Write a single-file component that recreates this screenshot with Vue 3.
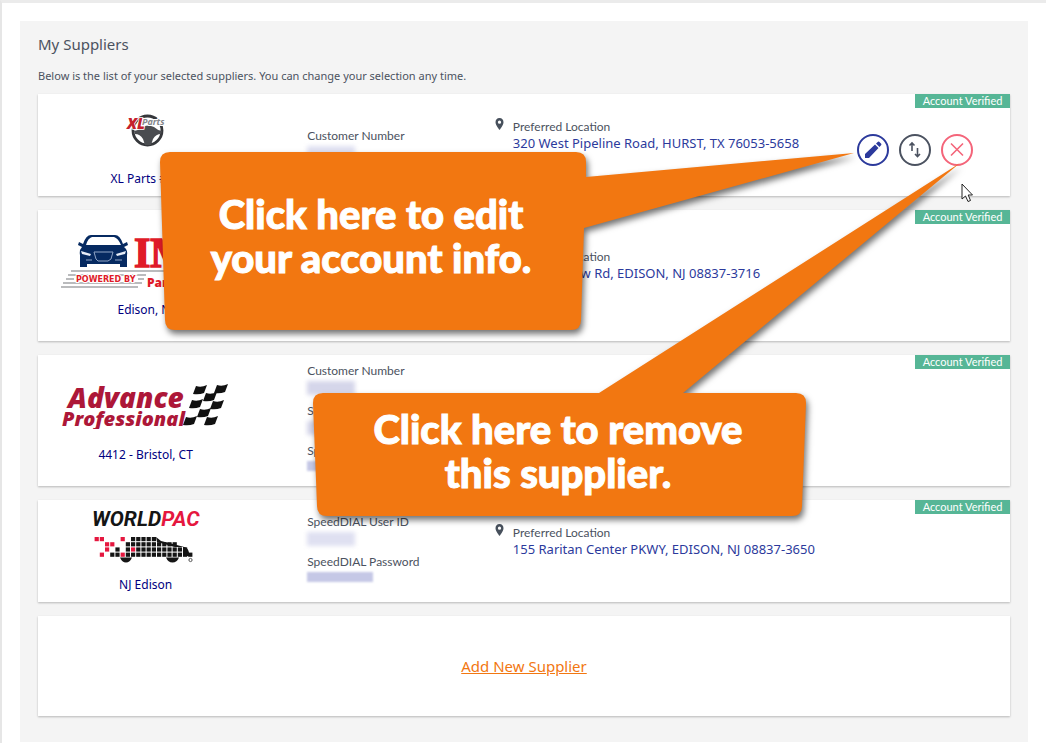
<script setup>
const suppliers = [
  {
    id: 'xl',
    name: 'XL Parts #12',
    fields: [{ label: 'Customer Number', mask: 'soft' }],
    address: '320 West Pipeline Road, HURST, TX 76053-5658',
    actions: true,
  },
  {
    id: 'imc',
    name: 'Edison, NJ',
    fields: [
      { label: 'Customer Number', mask: 'soft' },
      { label: 'User ID', mask: 'soft' },
      { label: 'Password', mask: 'dark' },
    ],
    address: '300 Meadow Rd, EDISON, NJ 08837-3716',
  },
  {
    id: 'advance',
    name: '4412 - Bristol, CT',
    fields: [
      { label: 'Customer Number', mask: 'mid' },
      { label: 'SpeedDIAL User ID', mask: 'mid' },
      { label: 'SpeedDIAL Password', mask: 'dark' },
    ],
  },
  {
    id: 'worldpac',
    name: 'NJ Edison',
    fields: [
      { label: 'SpeedDIAL User ID', mask: 'soft' },
      { label: 'SpeedDIAL Password', mask: 'dark' },
    ],
    address: '155 Raritan Center PKWY, EDISON, NJ 08837-3650',
  },
]

// r = red, b = black, one character per square of the mosaic
const mosaic = [
  'rr...r.bbbbb.......',
  '..rr..bbbbbbbbbb...',
  '..r.b.brbbbbbbbbbb.',
  '.r.bbrbbbbbbbbbbbbb',
]
const squares = mosaic.flatMap((row, y) =>
  [...row].map((c, x) => ({ c, x: x * 5.2 + 3.6, y: y * 5.2 + 29 })).filter((s) => s.c !== '.'),
)

// centres of the black cells of the chequered flag
const checks = [
  [140, 7], [161, 6],
  [150, 14],
  [136, 21], [157, 22],
  [144, 30],
  [130, 38], [151, 38],
]
</script>

<template>
  <div class="page">
    <main class="panel">
      <h1>My Suppliers</h1>
      <p class="intro">Below is the list of your selected suppliers. You can change your selection any time.</p>

      <div class="cards">
        <section v-for="s in suppliers" :key="s.id" class="card">
          <span class="badge">Account Verified</span>

          <div class="brand">
            <div class="logo">
              <svg v-if="s.id === 'xl'" width="42" height="36" viewBox="0 0 42 36" role="img" aria-label="XL Parts">
                <circle cx="22.500" cy="18.500" r="14.500" fill="none" stroke="#35373b" stroke-width="2.800" />
                <path d="M9 19 Q14 18 17 15 Q23 12 29 15 Q32 18 37 19 L36 22 Q31 22 28 27 L26 33 H20 L18 27 Q15 22 10 22Z" fill="#4a4c50" />
                <text x="2" y="17" font-size="15" font-weight="900" font-style="italic" fill="#c5202c" stroke="#fff" stroke-width="1.500" paint-order="stroke">XL</text>
                <text x="17" y="13" font-size="9" font-weight="700" font-style="italic" fill="#85878b" stroke="#fff" stroke-width="2" paint-order="stroke">Parts</text>
              </svg>

              <svg v-else-if="s.id === 'imc'" width="172" height="56" viewBox="0 0 172 56" role="img" aria-label="IMC, powered by Parts Authority">
                <path d="M23 11 Q26 2 31 2 H55 Q60 2 63 11 L67 9 L68 12 L64 14 Q68 17 67 22 V34 H60 V31 H27 V34 H20 V22 Q19 17 22 14 L18 12 L19 9Z" fill="#062a61" />
                <path d="M26 12 Q28 5 32 4 H54 Q58 5 61 12Z" fill="#fff" />
                <path d="M21 18 L31 21 L30 23 L22 21Z M66 18 L56 21 L57 23 L65 21Z" fill="#e8eef8" />
                <path d="M34 19 H53 L51 26 L48 28 H38 L36 26Z M26 27 H32 M55 27 H62" fill="none" stroke="#90a4c5" />
                <text x="74" y="34" font-size="42" font-weight="700" font-family="Liberation Serif, serif" fill="#e01b29" stroke="#e01b29" stroke-width="1.500">IMC</text>
                <path d="M11 38 H172 M8 42 H86 M6 46 H14 M78 46 H84 M3 50 H82 M1 54 H78" stroke="#77797c" stroke-width="1.200" />
                <text x="16" y="49" font-size="8" font-weight="700" font-family="DejaVu Sans, sans-serif" fill="#e01b29" stroke="#fff" stroke-width="2" paint-order="stroke">POWERED BY</text>
                <text x="87" y="54" font-size="12" font-weight="900" fill="#e01b29">Parts Authority</text>
              </svg>

              <svg v-else-if="s.id === 'advance'" width="172" height="46" viewBox="0 0 172 46" role="img" aria-label="Advance Professional">
                <g fill="#ad1738" font-weight="800" font-style="italic" font-family="Open Sans, sans-serif">
                  <text x="8" y="25" font-size="28">Advance</text>
                  <text x="2" y="43" font-size="20">Professional</text>
                </g>
                <path
                  v-for="(c, i) in checks"
                  :key="i"
                  :d="`M${c[0] - 4} ${c[1] - 4} q5 2 11 -1 l-3 8 q-5 2 -11 1Z`"
                  fill="#111"
                />
              </svg>

              <svg v-else width="110" height="56" viewBox="0 0 110 56" role="img" aria-label="WORLDPAC">
                <text x="1" y="18" class="wordmark">WORLD<tspan fill="#e5173f">PAC</tspan></text>
                <rect
                  v-for="(q, i) in squares"
                  :key="i"
                  :x="q.x"
                  :y="q.y"
                  width="4.200"
                  height="4.200"
                  :fill="q.c === 'r' ? '#e5173f' : '#151515'"
                />
                <path d="M65 29 L70 33 L84 36.500 L95 39.500 Q99 43 98 48 H92 V39 H84 L66 34Z M29 49.500 H41 Q39 54.500 35 54.500 T29 49.500Z M75 49.500 H88 Q86 54.500 81.500 54.500 T75 49.500Z" fill="#151515" />
                <circle cx="99.500" cy="52" r="1.600" fill="none" stroke="#555" />
              </svg>
            </div>
            <div class="name">{{ s.name }}</div>
          </div>

          <dl class="fields">
            <div v-for="f in s.fields" :key="f.label" class="field">
              <dt>{{ f.label }}</dt>
              <dd><span class="mask" :class="f.mask"></span></dd>
            </div>
          </dl>

          <div class="where">
            <template v-if="s.address">
              <svg class="pin" width="9" height="12" viewBox="0 0 9 12" aria-hidden="true">
                <path d="M4.500 0C2 0 .5 1.800.5 4.200.5 7 4.500 12 4.500 12S8.500 7 8.500 4.200C8.500 1.800 7 0 4.500 0Zm0 5.800a1.600 1.600 0 1 1 0-3.200 1.600 1.600 0 0 1 0 3.200Z" fill="#47505c" />
              </svg>
              <div>
                <div class="where-label">Preferred Location</div>
                <div class="address">{{ s.address }}</div>
              </div>
            </template>
          </div>

          <div v-if="s.actions" class="actions">
            <button class="edit" type="button" aria-label="Edit account">
              <svg width="18" height="18" viewBox="0 0 18 18"><path d="M1 17v-4L11 3.500l3.500 3.500L5 17ZM12 2.500l2-1.800q.6-.5 1.200 0l2 2q.5.600 0 1.200L15.500 6Z" fill="currentColor" /></svg>
            </button>
            <button class="swap" type="button" aria-label="Reorder">
              <svg width="18" height="18" viewBox="0 0 18 18" fill="none" stroke="currentColor" stroke-width="1.600"><path d="M6 10V2M3.500 4.500L6 2l2.500 2.500M11.500 7v8.500M9 13l2.500 2.500L14 13" /></svg>
            </button>
            <button class="remove" type="button" aria-label="Remove supplier">
              <svg width="18" height="18" viewBox="0 0 18 18" fill="none" stroke="currentColor" stroke-width="1.600"><path d="M3 2.500l12 12M15 2.500L3 14.500" /></svg>
            </button>
          </div>
        </section>

        <section class="card add">
          <a href="#">Add New Supplier</a>
        </section>
      </div>
    </main>

    <svg class="shapes" width="1046" height="743" viewBox="0 0 1046 743" aria-hidden="true">
      <path d="M170 152H576Q586 152 586 162L586 177 854 153 584 228 581 320Q581 330 571 330H175Q165 330 165 320L160 162Q160 152 170 152Z" />
      <path d="M323 393H599L960 163 683 393H796Q806 393 806 403L802 506Q802 516 792 516H327Q317 516 317 506L313 403Q313 393 323 393Z" />
    </svg>
    <div class="callout one">Click here to edit<br />your account info.</div>
    <div class="callout two">Click here to remove<br />this supplier.</div>
    <svg class="cursor" width="13" height="20" viewBox="0 0 13 20" aria-hidden="true">
      <path d="M1 1V16L4.500 13 7 18.500 9.500 17.500 7.200 12H11.500Z" fill="#fff" stroke="#222" />
    </svg>
  </div>
</template>

<style>
body {
  background: #fff;
}
</style>

<style scoped>
.page {
  position: relative;
  box-sizing: border-box;
  padding: 18px 18px 1px;
  border-top: 3px solid #ebebeb;
  border-left: 2px solid #e6e6e6;
  overflow: hidden;
  font-family: "Noto Sans", "Open Sans", sans-serif;
  font-size: 12px;
  color: #4b5260;
}
.panel {
  padding: 13px 18px 26px;
  background: #f4f4f4;
}
h1 {
  margin: 0 0 14px;
  font-size: 15px;
  line-height: 20px;
  font-weight: 400;
}
.intro {
  margin: 0 0 10px;
  font-size: 11px;
  line-height: 16px;
}
.cards {
  display: flex;
  flex-direction: column;
  gap: 14px;
}
.card {
  position: relative;
  display: grid;
  grid-template-columns: 27.700% 19.300% 1fr auto;
  align-items: center;
  background: #fff;
  box-shadow: 0 1px 2px rgba(0, 0, 0, 0.25);
}
.badge {
  position: absolute;
  top: 0;
  right: 0;
  width: 95px;
  line-height: 14px;
  font-family: Lato, sans-serif;
  font-size: 11px;
  text-align: center;
  color: #fff;
  background: #56b696;
}
.brand {
  padding-right: 54px;
  text-align: center;
  color: #000080;
}
.logo {
  display: flex;
  align-items: center;
  justify-content: center;
  height: 72px;
}
.wordmark {
  font-family: "Liberation Sans Narrow", Roboto, sans-serif;
  font-size: 21px;
  font-weight: 700;
  font-style: italic;
  fill: #151515;
}
.name {
  line-height: 26px;
  padding-bottom: 4px;
}
.fields {
  margin: 0;
  padding: 6px 0 5px;
}
.field,
dt,
dd {
  margin: 0;
}
dt,
dd {
  height: 20px;
  line-height: 20px;
}
dt,
.where-label {
  font-family: Lato, sans-serif;
}
.mask {
  display: block;
  width: 48px;
  height: 14px;
  background: #dfe0f1;
  filter: blur(2px);
}
.mask.mid {
  background: #d5d6ea;
}
.mask.dark {
  width: 66px;
  height: 10px;
  background: #c5c8e6;
  filter: blur(1px);
}
.where {
  display: flex;
  gap: 9px;
  padding-bottom: 21px;
}
.where-label {
  line-height: 17px;
}
.address {
  line-height: 17px;
  font-size: 13px;
  color: #2c3a9c;
}
.actions {
  display: flex;
  gap: 10px;
  padding: 10px 37px 0 0;
}
.actions button {
  display: grid;
  place-items: center;
  width: 32px;
  height: 32px;
  padding: 0;
  border: 2px solid currentColor;
  border-radius: 50%;
  background: #fff;
}
.edit {
  color: #2c3a9c;
}
.swap {
  color: #4b5260;
}
.actions .remove {
  color: #f4657a;
}
.add {
  display: flex;
  justify-content: center;
  height: 100px;
}
.add a {
  font-size: 15px;
  color: #f27711;
}
.shapes {
  position: absolute;
  top: -3px;
  left: -2px;
  fill: #f27711;
  filter: drop-shadow(2px 4px 3px rgba(0, 0, 0, 0.55));
  pointer-events: none;
}
.callout {
  position: absolute;
  width: 420px;
  text-align: center;
  font-family: Lato, sans-serif;
  font-size: 40px;
  font-weight: 900;
  line-height: 44px;
  color: #fff;
  -webkit-text-stroke: 1px #fff;
}
.one {
  top: 189px;
  left: 159px;
}
.two {
  top: 404px;
  left: 346px;
}
.cursor {
  position: absolute;
  top: 180px;
  left: 959px;
}
</style>
